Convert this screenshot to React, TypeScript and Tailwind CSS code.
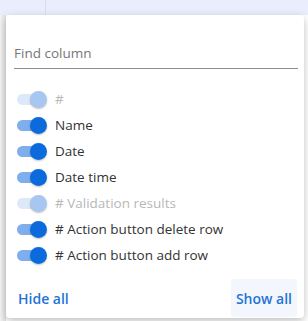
import React from "react";

type Column = { label: string; disabled?: boolean };

const columns: Column[] = [
  { label: "#", disabled: true },
  { label: "Name" },
  { label: "Date" },
  { label: "Date time" },
  { label: "# Validation results", disabled: true },
  { label: "# Action button delete row" },
  { label: "# Action button add row" },
];

function Toggle({ disabled }: { disabled?: boolean }) {
  return (
    <span className="relative inline-block h-[17px] w-[30px] shrink-0">
      <span
        className={
          "absolute left-0 top-[3px] h-[11px] w-[26px] rounded-full " +
          (disabled ? "bg-[#dde8f9]" : "bg-[#7eaeec]")
        }
      />
      <span
        className={
          "absolute right-0 top-0 h-[17px] w-[17px] rounded-full shadow-[0_1px_2px_rgba(0,0,0,0.25)] " +
          (disabled ? "bg-[#a7c7f0]" : "bg-[#0b6bdc]")
        }
      />
    </span>
  );
}

export default function App() {
  return (
    <div
      className="relative h-[321px] w-[308px] overflow-hidden bg-white"
      style={{ fontFamily: '"Open Sans", "Noto Sans", sans-serif' }}
    >
      <div className="flex h-[15px] bg-[#e8eefb]">
        <div className="w-[46px] border-r border-[#d6ddec]" />
      </div>
      <div className="h-full w-[6px] bg-gradient-to-r from-[#f4f4f4] to-[#e2e2e2]" />

      <div className="absolute left-[6px] top-[15px] flex h-[303px] w-[298px] flex-col rounded-[4px] bg-white px-[8px] shadow-[0_3px_8px_rgba(0,0,0,0.25)]">
        <div className="mt-[28px] mr-[-2px] border-b border-[#8c8c8c] pb-[5px] text-[13.5px] leading-[20px] text-[#767676]">
          Find column
        </div>

        <div className="mt-[17px] flex flex-col">
          {columns.map((col) => (
            <div key={col.label} className="flex h-[26px] items-center pl-[3px]">
              <Toggle disabled={col.disabled} />
              <span
                className={
                  "ml-[8px] text-[13.5px] " +
                  (col.disabled ? "text-[#b8b8b8]" : "text-[#333333]")
                }
              >
                {col.label}
              </span>
            </div>
          ))}
        </div>

        <div className="mt-auto mb-[1px] flex items-center justify-between">
          <button
            type="button"
            className="h-[38px] rounded-[4px] px-[4px] text-[14px] font-semibold text-[#1f74d6]"
          >
            Hide all
          </button>
          <button
            type="button"
            className="mr-[-1px] h-[38px] rounded-[4px] bg-[#f3f7fd] px-[5px] text-[14px] font-semibold text-[#1f74d6]"
          >
            Show all
          </button>
        </div>
      </div>
    </div>
  );
}
